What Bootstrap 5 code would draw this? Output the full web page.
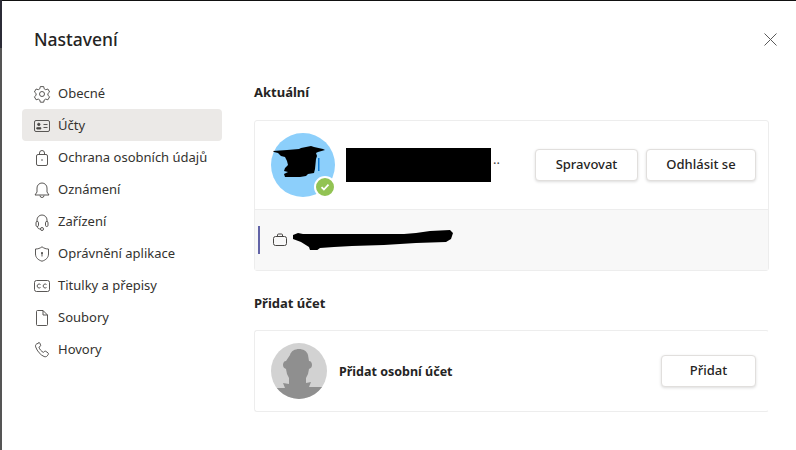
<!DOCTYPE html>
<html lang="cs">
<head>
    <meta charset="UTF-8">
    <meta name="viewport" content="width=device-width, initial-scale=1">
    <title>Nastavení</title>
    <link rel="stylesheet" href="https://cdn.jsdelivr.net/npm/bootstrap@5.3.0/dist/css/bootstrap.min.css">
    <style>
        html, body { height: 450px; overflow: hidden; }
        body { background: #fff; color: #252423; font-family: "Noto Sans", "Liberation Sans", sans-serif; font-size: 13px; }

        /* okno aplikace za dialogem */
        .app-edge { width: 2px; background: linear-gradient(#2b2b36 0, #2b2b36 48px, #555 48px); }
        .dlg { border-top: 1px solid #111; height: 450px; }
        .dlg-head { height: 76px; padding: 24px 19px 0 32px; }
        .dlg-title { font-size: 17.5px; font-weight: 500; line-height: 28px; margin: 0; }
        .dlg-close { background: none; border: 0; padding: 0; line-height: 0; margin-top: 8px; }

        .side-menu { width: 200px; margin-left: 20px; }
        .side-link { height: 32px; padding: 2px 0 0 10px; gap: 6px; color: #33322f; border-radius: 4px; font-size: 13px; }
        .side-link:hover, .side-link:focus { color: #33322f; }
        .side-link.active { background: #ebe9e7; color: #33322f; }
        .side-ico { width: 20px; height: 20px; flex: none; stroke-width: .9; }

        .acc-pane { width: 515px; margin-left: 32px; }
        .acc-h { font-size: 13px; font-weight: 700; line-height: 20px; margin: 5px 0 18px; }
        .acc-h2 { margin: 22px 0 17px; }
        .acc-box { border: 1px solid #ededed; border-radius: 3px; }
        .acc-box-open { border-right-color: transparent; }
        .acc-top { height: 88px; padding: 0 12px 0 16px; }
        .acc-org { height: 61px; background: #f8f8f8; border-top: 1px solid #ededed; padding-left: 3px; }
        .org-bar { width: 2px; height: 28px; background: #6264a7; margin-right: 12px; }
        .ava-wrap { width: 64px; height: 64px; }
        .ava-badge { position: absolute; right: -1px; bottom: -1px; width: 22px; height: 22px; border-radius: 50%; background: #92c353; border: 2px solid #fff; }
        .mask { margin-left: 11px; }
        .mask-dots { font-size: 13px; line-height: 1; margin: -12px 0 0 2px; color: #444; }
        .acc-btn { height: 32px; background: #fff; color: #252423; border: 1px solid #e1dfdd; border-radius: 4px; font-size: 13px; font-weight: 500; padding: 0; box-shadow: 0 1px 3px rgba(0, 0, 0, .14); }
        .acc-btn-a { width: 103px; }
        .acc-btn-b { width: 110px; margin-left: 8px; }
        .acc-btn-c { width: 95px; }
        .acc-add { height: 82px; padding: 0 12px 0 16px; }
        .add-label { font-weight: 700; font-size: 12.5px; margin-left: 12px; padding-top: 2px; }
    </style>
</head>
<body>
    <div class="d-flex">
        <div class="app-edge"></div>
        <div class="dlg flex-grow-1">
            <div class="dlg-head d-flex justify-content-between align-items-start">
                <h1 class="dlg-title">Nastavení</h1>
                <button class="dlg-close" type="button" aria-label="Zavřít">
                    <svg width="13" height="13" viewBox="0 0 13 13" fill="none" stroke="#5a5a5a" stroke-width="1"><path d="M.5.5l12 12M12.500.5l-12 12"/></svg>
                </button>
            </div>
            <div class="d-flex">
                <nav class="nav flex-column side-menu">
                    <a class="nav-link side-link d-flex align-items-center" href="#">
                        <svg class="side-ico" viewBox="0 0 20 20" fill="none" stroke="#484644"><circle cx="10" cy="10" r="2.500"/><path d="M8.300 2.600h3.400l.5 2.200 1.500.9 2.200-.7 1.700 3-1.700 1.500v1.800l1.700 1.500-1.700 3-2.200-.7-1.500.9-.5 2.200H8.300l-.5-2.200-1.500-.9-2.200.7-1.700-3 1.700-1.500V9.500L2.400 8l1.700-3 2.200.7 1.500-.9z" stroke-linejoin="round"/></svg>
                        Obecné
                    </a>
                    <a class="nav-link side-link active d-flex align-items-center" href="#">
                        <svg class="side-ico" viewBox="0 0 20 20" fill="none" stroke="#484644"><rect x="2.500" y="4.500" width="15" height="11" rx="1.500"/><circle cx="6.800" cy="8.400" r="1.200" fill="#484644"/><path d="M4.800 13v-1.300h4V13z" fill="#484644"/><path d="M11.500 8.500h4M11.500 11.500h4"/></svg>
                        Účty
                    </a>
                    <a class="nav-link side-link d-flex align-items-center" href="#">
                        <svg class="side-ico" viewBox="0 0 20 20" fill="none" stroke="#484644"><rect x="4.500" y="6.500" width="11" height="11" rx="1.500"/><path d="M7.500 6.500V5a2.500 2.500 0 0 1 5 0v1.500"/><circle cx="10" cy="12" r=".8" fill="#484644" stroke="none"/></svg>
                        Ochrana osobních údajů
                    </a>
                    <a class="nav-link side-link d-flex align-items-center" href="#">
                        <svg class="side-ico" viewBox="0 0 20 20" fill="none" stroke="#484644"><path d="M5 8a5 5 0 0 1 10 0v4l2 3H3l2-3z" stroke-linejoin="round"/><path d="M8 15.500a2 2 0 0 0 4 0"/></svg>
                        Oznámení
                    </a>
                    <a class="nav-link side-link d-flex align-items-center" href="#">
                        <svg class="side-ico" viewBox="0 0 20 20" fill="none" stroke="#484644"><path d="M5 10V8a5 5 0 0 1 10 0v2"/><rect x="4" y="9.500" width="2.500" height="5" rx="1.200"/><rect x="13.500" y="9.500" width="2.500" height="5" rx="1.200"/><path d="M5.500 14.500c0 2 1.200 2.500 3 2.500"/><circle cx="10" cy="17" r="1.500"/></svg>
                        Zařízení
                    </a>
                    <a class="nav-link side-link d-flex align-items-center" href="#">
                        <svg class="side-ico" viewBox="0 0 20 20" fill="none" stroke="#484644"><path d="M10 2.800c2 1.500 4 2.200 6.500 2.200v5c0 3.500-2.500 6-6.500 7.200C6 16 3.500 13.500 3.500 10V5C6 5 8 4.300 10 2.800z" stroke-linejoin="round"/><circle cx="10" cy="9" r="1" fill="#484644" stroke="none"/><path d="M10 9v3.500"/></svg>
                        Oprávnění aplikace
                    </a>
                    <a class="nav-link side-link d-flex align-items-center" href="#">
                        <svg class="side-ico" viewBox="0 0 20 20" fill="none" stroke="#484644"><rect x="2.500" y="4.500" width="15" height="11" rx="2"/><path d="M8.500 8.500a2 2 0 1 0 0 3M14.500 8.500a2 2 0 1 0 0 3"/></svg>
                        Titulky a přepisy
                    </a>
                    <a class="nav-link side-link d-flex align-items-center" href="#">
                        <svg class="side-ico" viewBox="0 0 20 20" fill="none" stroke="#484644"><path d="M4.500 3.500a1 1 0 0 1 1-1h5.500l4.500 4.500v9.500a1 1 0 0 1-1 1h-9a1 1 0 0 1-1-1z" stroke-linejoin="round"/><path d="M11 2.500V7h4.500"/></svg>
                        Soubory
                    </a>
                    <a class="nav-link side-link d-flex align-items-center" href="#">
                        <svg class="side-ico" viewBox="0 0 20 20" fill="none" stroke="#484644"><path d="M6.800 3l-2.300 1c-1 .6-1.200 1.800-.8 3 1.500 4.200 4.800 8 8.300 9.500 1.300.5 2.500.3 3.300-.7l1-1.500c.3-.5.200-1-.3-1.400l-2.200-1.600c-.5-.3-1-.3-1.400.1l-.9 1c-2.200-1-3.800-3-4.600-5.200l1.200-.7c.5-.4.700-.9.500-1.400l-.8-2c-.3-.5-.7-.7-1-.6z" stroke-linejoin="round"/></svg>
                        Hovory
                    </a>
                </nav>

                <div class="acc-pane">
                    <h2 class="acc-h">Aktuální</h2>
                    <div class="acc-box">
                        <div class="acc-top d-flex align-items-center">
                            <div class="ava-wrap position-relative">
                                <svg width="64" height="64" viewBox="0 0 64 64">
                                    <circle cx="32" cy="32" r="32" fill="#8ccffb"/>
                                    <path d="M14 37h12v1H14zM47 25h1.500v13H47z" fill="#0a78d6"/>
                                    <path d="M2 18l14-1 12-1 2-1 10-2 3 1 9 2 2 1-7 2-2 1 1 3-1 3-1 10-1 4-6 1-2 2-6 1H14l-1-3 4-2-4-1 1-3 3-3-1-4-2-4-4-1-3-3-4-1z" fill="#000"/>
                                </svg>
                                <span class="ava-badge d-flex align-items-center justify-content-center">
                                    <svg width="10" height="10" viewBox="0 0 10 10" fill="none" stroke="#fff" stroke-width="1.800"><path d="M1.500 5.200l2.400 2.300 4.600-4.800"/></svg>
                                </span>
                            </div>
                            <svg class="mask" width="145" height="34" viewBox="0 0 145 34"><rect width="145" height="34" fill="#000"/></svg>
                            <span class="mask-dots">..</span>
                            <button class="btn acc-btn acc-btn-a ms-auto" type="button">Spravovat</button>
                            <button class="btn acc-btn acc-btn-b" type="button">Odhlásit se</button>
                        </div>
                        <div class="acc-org d-flex align-items-center">
                            <span class="org-bar"></span>
                            <svg width="16" height="16" viewBox="0 0 16 16" fill="none" stroke="#484644"><rect x="1.500" y="4.500" width="13" height="9" rx="2"/><path d="M5.500 4.500V3a1 1 0 0 1 1-1h3a1 1 0 0 1 1 1v1.500"/></svg>
                            <svg class="ms-1" width="162" height="20" viewBox="0 0 162 20"><path d="M1 5l5-2 5 1 26 0 25 0 30 0 20 0 12-1 14-2 20-1 3 3-2 6-5 3-30 1-32 2-32 1-18 1-14 1-4 3-6-1-1-3-8-5-8-3z" fill="#000"/></svg>
                        </div>
                    </div>

                    <h2 class="acc-h acc-h2">Přidat účet</h2>
                    <div class="acc-box acc-box-open acc-add d-flex align-items-center">
                        <svg width="56" height="56" viewBox="0 0 56 56">
                            <defs><clipPath id="ava-clip"><circle cx="28" cy="28" r="28"/></clipPath></defs>
                            <circle cx="28" cy="28" r="28" fill="#d2d2d2"/>
                            <g clip-path="url(#ava-clip)" fill="#8f8f8f">
                                <path d="M19 12c1-4 5-6 9-6s8 2 9 6l1 6c2 0 3 2 3 4s-1 3-3 4l-1 5-2 4v5l5-1-2 5h16v16H-2V45h16l-2-5 6 1v-6l-2-4-1-5c-2-1-3-2-3-4s1-4 3-4z"/>
                            </g>
                        </svg>
                        <span class="add-label">Přidat osobní účet</span>
                        <button class="btn acc-btn acc-btn-c ms-auto" type="button">Přidat</button>
                    </div>
                </div>
            </div>
        </div>
    </div>
    <script src="https://cdn.jsdelivr.net/npm/bootstrap@5.3.0/dist/js/bootstrap.bundle.min.js"></script>
</body>
</html>
